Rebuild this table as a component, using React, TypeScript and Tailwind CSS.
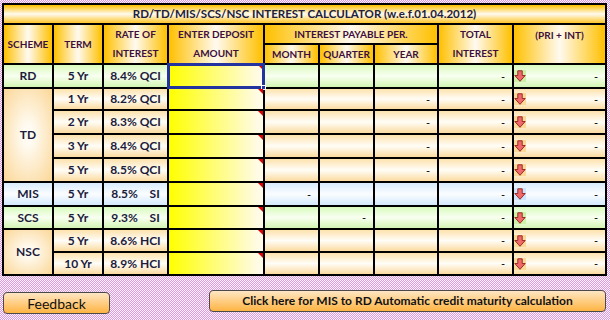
import React from "react";

type Tone = "green" | "orange" | "blue";

const rowBg: Record<Tone, string> = {
  green: "bg-[image:linear-gradient(to_bottom,#d9fbbf,#f8fff0_50%,#d3f5b3)]",
  orange: "bg-[image:linear-gradient(to_bottom,#fde2ad,#fffdf7_50%,#fbdba0)]",
  blue: "bg-[image:linear-gradient(to_bottom,#d8ecfe,#fbfdff_50%,#d3e9fd)]",
};

const patch: Record<Tone, string> = {
  green: "#cdf2a6",
  orange: "#fbd996",
  blue: "#cde5fb",
};

const headBg = "bg-[image:linear-gradient(to_right,#ffc000,#fffaf0_50%,#ffc000)]";
const mergedBg = "bg-[image:radial-gradient(ellipse_at_center,#fffbf2_15%,#fbd797)]";
const depositBg = "bg-[image:linear-gradient(to_right,#ffff00,#fffbe6_95%)]";

interface Row {
  scheme?: string;
  span?: number;
  term: string;
  rate: string;
  tone: Tone;
  dash: [boolean, boolean, boolean];
  selected?: boolean;
}

const rows: Row[] = [
  { scheme: "RD", term: "5 Yr", rate: "8.4% QCI", tone: "green", dash: [false, false, false], selected: true },
  { scheme: "TD", span: 4, term: "1 Yr", rate: "8.2% QCI", tone: "orange", dash: [false, false, true] },
  { term: "2 Yr", rate: "8.3% QCI", tone: "orange", dash: [false, false, true] },
  { term: "3 Yr", rate: "8.4% QCI", tone: "orange", dash: [false, false, true] },
  { term: "5 Yr", rate: "8.5% QCI", tone: "orange", dash: [false, false, true] },
  { scheme: "MIS", term: "5 Yr", rate: "8.5%    SI", tone: "blue", dash: [true, false, false] },
  { scheme: "SCS", term: "5 Yr", rate: "9.3%    SI", tone: "green", dash: [false, true, false] },
  { scheme: "NSC", span: 2, term: "5 Yr", rate: "8.6% HCI", tone: "orange", dash: [false, false, false] },
  { term: "10 Yr", rate: "8.9% HCI", tone: "orange", dash: [false, false, false] },
];

const Dash = () => <span className="text-[11px] leading-none text-black pr-[7px]">-</span>;

const Arrow = ({ fill }: { fill: string }) => (
  <svg width="12" height="12" viewBox="0 0 12 12" className="shrink-0">
    <rect width="12" height="12" fill={fill} />
    <path d="M3.8 0.8h4.4v4.7h3L6 11.3 0.8 5.5h3z" fill="#f06a6a" stroke="#9c2a2a" strokeWidth="1" />
  </svg>
);

const Flag = () => (
  <span className="absolute top-0 right-0 w-0 h-0 border-t-[5px] border-t-[#e00000] border-l-[5px] border-l-transparent" />
);

export default function App() {
  return (
    <div className="w-[610px] h-[320px] pt-[3px] pl-[2px] bg-[image:repeating-conic-gradient(#ea8fea_0_25%,#ffffff_0_50%)] bg-[length:2px_2px] font-['Lato','Noto_Sans',sans-serif]">
      <div className="grid w-[605px] bg-black gap-[2px] p-[2px] grid-cols-[48px_48px_63px_94px_53px_53px_62px_73px_91px] grid-rows-[18px_18px_18px_22px_20px_22px_22px_22px_22px_21px_21px_21px]">
        <div className="col-span-9 flex items-center justify-center bg-[image:linear-gradient(to_bottom,#ffc000,#fffaf0_50%,#ffc62a)] text-[11.5px] font-bold text-[#202040]">
          RD/TD/MIS/SCS/NSC INTEREST CALCULATOR (w.e.f.01.04.2012)
        </div>

        <div className={`row-span-2 flex items-center justify-center text-[10px] font-bold text-[#3d0f3d] ${headBg}`}>SCHEME</div>
        <div className={`row-span-2 flex items-center justify-center text-[10px] font-bold text-[#3d0f3d] ${headBg}`}>TERM</div>
        <div className={`row-span-2 flex flex-col items-center justify-around text-[10px] font-bold text-[#3d0f3d] ${headBg}`}>
          <span>RATE OF</span>
          <span>INTEREST</span>
        </div>
        <div className={`row-span-2 flex flex-col items-center justify-around text-[10px] font-bold text-[#3d0f3d] ${headBg}`}>
          <span>ENTER DEPOSIT</span>
          <span>AMOUNT</span>
        </div>
        <div className={`col-span-3 flex items-center justify-center text-[10px] font-bold text-[#3d0f3d] ${headBg}`}>INTEREST PAYABLE PER.</div>
        <div className={`row-span-2 flex flex-col items-center justify-around text-[10px] font-bold text-[#3d0f3d] ${headBg}`}>
          <span>TOTAL</span>
          <span>INTEREST</span>
        </div>
        <div className={`row-span-2 flex flex-col items-center justify-start pt-[3px] text-[10px] font-bold text-[#3d0f3d] ${headBg}`}>
          <span>(PRI + INT)</span>
        </div>
        <div className={`flex items-center justify-center text-[10px] font-bold text-[#3d0f3d] ${headBg}`}>MONTH</div>
        <div className={`flex items-center justify-center text-[10px] font-bold text-[#3d0f3d] ${headBg}`}>QUARTER</div>
        <div className={`flex items-center justify-center text-[10px] font-bold text-[#3d0f3d] ${headBg}`}>YEAR</div>

        {rows.map((r, i) => {
          const bg = rowBg[r.tone];
          return (
            <React.Fragment key={i}>
              {r.scheme && (
                <div
                  className={`flex items-center justify-center text-[12px] font-bold text-[#1c1c3c] ${
                    r.span === 4 ? "row-span-4" : r.span === 2 ? "row-span-2" : ""
                  } ${r.span ? mergedBg : bg}`}
                >
                  {r.scheme}
                </div>
              )}
              <div className={`flex items-center justify-center text-[12px] font-bold text-[#1c1c3c] ${bg}`}>{r.term}</div>
              <div className={`flex items-center justify-center whitespace-pre text-[12px] font-bold text-[#1c1c3c] ${bg}`}>{r.rate}</div>
              <div className={`relative ${depositBg}`}>
                <Flag />
                {r.selected && (
                  <>
                    <span className="absolute -inset-[2px] border-[3px] border-[#23339f]" />
                    <span className="absolute -right-[3px] -bottom-[3px] w-[5px] h-[5px] bg-[#23339f] border border-white" />
                  </>
                )}
              </div>
              {r.dash.map((d, j) => (
                <div key={j} className={`flex items-center justify-end ${bg}`}>
                  {d && <Dash />}
                </div>
              ))}
              <div className={`flex items-center justify-end ${bg}`}>
                <Dash />
              </div>
              <div className={`flex items-center justify-between ${bg}`}>
                <Arrow fill={patch[r.tone]} />
                <Dash />
              </div>
            </React.Fragment>
          );
        })}
      </div>

      <div className="flex items-start mt-[14px]">
        <button className="ml-px mt-[2px] w-[107px] h-[22px] rounded-[4px] border border-[#4a4a4a] bg-[image:linear-gradient(to_bottom,#ffe6c4,#ffb443)] text-[14px] text-[#111]">
          Feedback
        </button>
        <button className="ml-[99px] w-[397px] h-[22px] rounded-[4px] border border-[#4a4a4a] bg-[image:linear-gradient(to_bottom,#ffe6c4,#ffb443)] text-[12px] font-bold text-[#111]">
          Click here for MIS to RD Automatic credit maturity calculation
        </button>
      </div>
    </div>
  );
}
